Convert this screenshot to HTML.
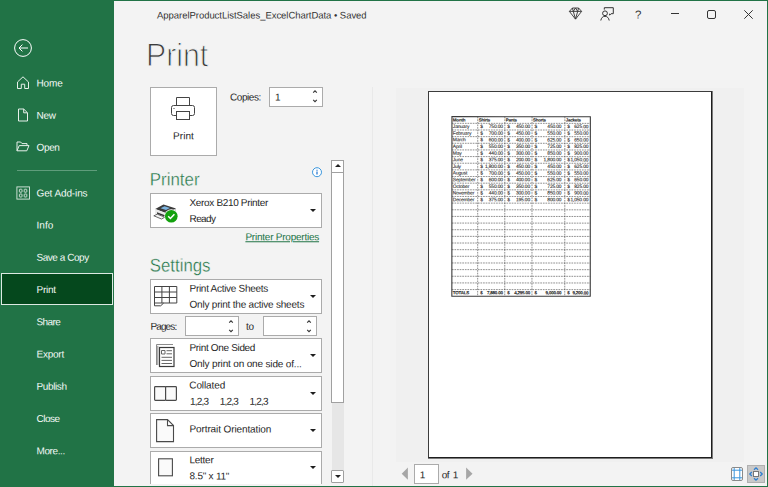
<!DOCTYPE html>
<html lang="en">
<head>
<meta charset="utf-8">
<title>Print</title>
<style>
*{box-sizing:border-box;margin:0;padding:0}
html,body{width:768px;height:487px;overflow:hidden;background:#f3f3f3}
body{font-family:"Liberation Sans",sans-serif;color:#262626;position:relative;font-size:10px}
.abs{position:absolute}
.t{position:absolute;white-space:nowrap;line-height:1;transform-origin:0 50%}
#frame{position:absolute;left:0;top:0;width:768px;height:487px;border:1px solid #217346;border-left:none;pointer-events:none;z-index:50}
#side{position:absolute;left:0;top:0;width:114px;height:487px;background:#217346;color:#fff}
#side .t{color:#f4f9f6}
svg{position:absolute;overflow:visible}
#sel{position:absolute;left:1px;top:273px;width:112px;height:32px;background:#05481d;border:1px solid #dde9e2}
.box{position:absolute;background:#fff;border:1px solid #ababab}
.hd{color:#217346}
.dd{position:absolute;left:150px;width:172px;height:35px;background:#fff;border:1px solid #ababab}
.ar{position:absolute;left:310px;width:0;height:0;border-left:3.200px solid transparent;border-right:3.200px solid transparent;border-top:3.600px solid #1e1e1e}
</style>
</head>
<body>

<!-- ============ SIDEBAR ============ -->
<div id="side">
  <svg style="left:14px;top:39px" width="18" height="18" viewBox="0 0 18 18" fill="none" stroke="#fff" stroke-width="1"><circle cx="9" cy="9" r="8.4"/><path d="M14 9H5.200M8.400 5.600L5 9l3.400 3.400"/></svg>

  <svg style="left:16px;top:75px" width="14" height="15" viewBox="0 0 14 15" fill="none" stroke="#e6f0ea" stroke-width="1"><path d="M1.5 7L7 1.8 12.5 7v6.5H8.7V9.2H5.3v4.3H1.5z"/></svg>
  <div class="t" id="t0" style="left:36px;top:78px;font-size:10px;transform:translate(0.50px,0.45px) rotate(0.06deg);letter-spacing:-0.149px">Home</div>

  <svg style="left:17px;top:108px" width="12" height="14" viewBox="0 0 12 14" fill="none" stroke="#e6f0ea" stroke-width="1"><path d="M1.5 1h5.2L10.5 4.8V13h-9zM6.7 1v3.8h3.8"/></svg>
  <div class="t" id="t1" style="left:36px;top:110px;font-size:10px;transform:translate(0.50px,0.85px) rotate(0.06deg);letter-spacing:-0.275px">New</div>

  <svg style="left:16px;top:141px" width="14" height="11" viewBox="0 0 14 11" fill="none" stroke="#e6f0ea" stroke-width="1"><path d="M1 9.8V1h3.6l1.4 1.6h5v2M1 9.8l2.2-5.2H13L10.8 9.8z"/></svg>
  <div class="t" id="t2" style="left:36px;top:142px;font-size:10px;transform:translate(0.50px,0.65px) rotate(0.06deg);letter-spacing:-0.345px">Open</div>

  <div class="abs" style="left:17px;top:169.600px;width:80px;height:1px;background:#5f9d7b"></div>

  <svg style="left:16px;top:185.500px" width="14" height="14" viewBox="0 0 14 14" fill="none" stroke="#dbe9e1" stroke-width="0.900"><rect x="0.900" y="0.900" width="12.600" height="12.200"/><rect x="3.400" y="3.200" width="2.600" height="3" rx="0.600"/><rect x="8.200" y="3.200" width="2.600" height="3" rx="0.600"/><rect x="3.400" y="8" width="2.600" height="3" rx="0.600"/><rect x="8.200" y="8" width="2.600" height="3" rx="0.600"/></svg>
  <div class="t" id="t3" style="left:36px;top:188px;font-size:10px;transform:translate(0.50px,0.45px) rotate(0.06deg);letter-spacing:-0.116px">Get Add-ins</div>

  <div class="t" id="t4" style="left:36px;top:220px;font-size:10px;transform:translate(0.50px,0.45px) rotate(0.06deg);letter-spacing:0.051px">Info</div>
  <div class="t" id="t5" style="left:36px;top:252px;font-size:10px;transform:translate(0.50px,0.65px) rotate(0.06deg);letter-spacing:-0.452px">Save a Copy</div>
  <div id="sel"></div>
  <div class="t" id="t6" style="left:36px;top:284px;font-size:10px;transform:translate(0.50px,0.95px) rotate(0.06deg);letter-spacing:-0.275px">Print</div>
  <div class="t" id="t7" style="left:36px;top:317px;font-size:10px;transform:translate(0.50px,0.15px) rotate(0.06deg);letter-spacing:-0.620px">Share</div>
  <div class="t" id="t8" style="left:36px;top:349px;font-size:10px;transform:translate(0.50px,0.45px) rotate(0.06deg);letter-spacing:-0.236px">Export</div>
  <div class="t" id="t9" style="left:36px;top:381px;font-size:10px;transform:translate(0.50px,0.65px) rotate(0.06deg);letter-spacing:-0.375px">Publish</div>
  <div class="t" id="t10" style="left:36px;top:414px;font-size:10px;transform:translate(0.50px,0.05px) rotate(0.06deg);letter-spacing:-0.498px">Close</div>
  <div class="t" id="t11" style="left:36px;top:446px;font-size:10px;transform:translate(0.50px,0.25px) rotate(0.06deg);letter-spacing:-0.405px">More...</div>
</div>

<!-- ============ TITLE BAR ============ -->
<div class="t" id="t12" style="left:157px;top:10px;font-size:9.5px;transform:translate(0.00px,0.40px) rotate(0.06deg);letter-spacing:-0.039px;color:#333">ApparelProductListSales_ExcelChartData • Saved</div>

<svg style="left:569px;top:7px" width="13" height="13" viewBox="0 0 13 13" fill="none" stroke="#333" stroke-width="0.9"><path d="M3.4 1h6.2l3 3.4L6.5 12.2 0.4 4.4zM0.4 4.4h12.2M4.3 4.4l2.2 7.6 2.2-7.6M3.4 1l.9 3.4L6.5 1l2.2 3.4L9.6 1"/></svg>
<svg style="left:600px;top:7px" width="14" height="14" viewBox="0 0 14 14" fill="none" stroke="#333" stroke-width="1"><circle cx="5" cy="6.3" r="2.4"/><path d="M0.8 13.5c.4-2.6 2-4.2 4.2-4.2s3.8 1.6 4.2 4.2M4.3 2.6V0.7h9v6h-2.2L9.6 8.2V6.7"/></svg>
<div class="t" id="t13" style="left:635px;top:9px;font-size:11.5px;transform:translate(0.00px,0.50px) rotate(0.06deg);color:#333">?</div>
<div class="abs" style="left:671px;top:13px;width:8px;height:1px;background:#333"></div>
<div class="abs" style="left:707px;top:10px;width:9px;height:9px;border:1px solid #333;border-radius:2px"></div>
<svg style="left:744px;top:10px" width="9" height="9" viewBox="0 0 9 9" stroke="#333" stroke-width="1"><path d="M0.3 0.3l8.4 8.4M8.7 0.3L0.3 8.7"/></svg>

<!-- ============ PRINT PANEL ============ -->
<div class="t" id="t14" style="left:146px;top:39px;font-size:32.7px;transform:translate(0.00px,0.10px) scaleX(0.925) rotate(0.06deg);color:#3b3b3b;-webkit-text-stroke:1px #f3f3f3">Print</div>

<div class="box" style="left:150px;top:87px;width:67px;height:69px"></div>
<svg style="left:171px;top:96px" width="24" height="24" viewBox="0 0 24 24" fill="none" stroke="#444" stroke-width="1"><path d="M5.500 9.500v-8h13v8M5.500 19.500h-3a2 2 0 0 1-2-2v-6a2 2 0 0 1 2-2h19a2 2 0 0 1 2 2v6a2 2 0 0 1-2 2h-3"/><rect x="5.500" y="15.500" width="13" height="8"/><path d="M2.500 12.500h1"/></svg>
<div class="t" id="t15" style="left:173px;top:131px;font-size:10px;transform:translate(0.00px,0.35px) rotate(0.06deg);letter-spacing:0.065px">Print</div>

<div class="t" id="t16" style="left:230px;top:92px;font-size:10px;transform:translate(0.00px,0.45px) rotate(0.06deg);letter-spacing:-0.445px">Copies:</div>
<div class="box" style="left:269px;top:87px;width:54px;height:20px"></div>
<div class="t" id="t17" style="left:275px;top:92px;font-size:10px;transform:translate(0.00px,0.45px) rotate(0.06deg)">1</div>
<svg class="abs" style="left:312px;top:89px" width="6" height="15" viewBox="0 0 6 15" fill="none" stroke="#333" stroke-width="1.1"><path d="M1.2 3.600l1.800-1.800 1.800 1.800M1.200 10.800l1.800 1.800 1.800-1.800"/></svg>

<div class="t hd" id="t18" style="left:149px;top:170px;font-size:18.2px;transform:translate(0.80px,0.55px) scaleX(0.93) rotate(0.06deg);-webkit-text-stroke:0.35px #f3f3f3">Printer</div>
<svg style="left:312px;top:166.500px" width="10" height="10" viewBox="0 0 10 10" fill="none" stroke="#3a96dd" stroke-width="1"><circle cx="5" cy="5.200" r="4.500" fill="#fff"/><path d="M5 4.600v3M5 2.800v1" stroke="#2b7cd3" stroke-width="1.300"/></svg>

<!-- scrollbar -->
<div class="abs" style="left:332px;top:172px;width:12px;height:298px;background:#e6e6e6"></div>
<div class="box" style="left:331px;top:160px;width:13px;height:13px;border-color:#a0a0a0"></div>
<div class="abs" style="left:334.500px;top:164px;width:0;height:0;border-left:3px solid transparent;border-right:3px solid transparent;border-bottom:3.500px solid #222"></div>
<div class="box" style="left:331px;top:172px;width:13px;height:231px;border-color:#a0a0a0"></div>
<div class="box" style="left:331px;top:470px;width:13px;height:13px;border-color:#a0a0a0;border-radius:1px"></div>
<div class="abs" style="left:334.500px;top:475px;width:0;height:0;border-left:3px solid transparent;border-right:3px solid transparent;border-top:3.500px solid #222"></div>

<!-- printer dropdown -->
<div class="dd" style="top:193px"></div>
<svg style="left:153px;top:203px" width="26" height="21" viewBox="0 0 26 21"><path d="M2.200 6L10.500 1.600 23 5.500 14 10.500z" fill="#3a3a3a"/><path d="M7.500 5.200l4-2 5.500 1.700-4 2.200z" fill="#7db4e0"/><path d="M2.200 6l11.800 4.500v5L2.200 11z" fill="#e9e9e9"/><path d="M14 10.500L23 5.500v4.500l-9 5.500z" fill="#c9c9c9"/><path d="M4 9.300l8 3v1.500l-8-3z" fill="#333"/><path d="M0.800 12.800l3.500-1.600 7.500 3-3.300 1.800z" fill="#f5f5f5" stroke="#444" stroke-width="0.800"/><circle cx="18.300" cy="13.200" r="6.900" fill="#fff"/><circle cx="18.300" cy="13.200" r="6.300" fill="#13a10e"/><path d="M15.200 13.300l2.200 2.200 4-4.300" fill="none" stroke="#fff" stroke-width="1.500"/></svg>
<div class="t" id="t19" style="left:189px;top:197px;font-size:10px;transform:translate(0.50px,0.95px) rotate(0.06deg);letter-spacing:-0.334px">Xerox B210 Printer</div>
<div class="t" id="t20" style="left:189px;top:214px;font-size:10px;transform:translate(0.50px,0.05px) rotate(0.06deg);letter-spacing:-0.583px">Ready</div>
<div class="ar" style="top:209px"></div>
<div class="t hd" id="t21" style="left:245px;top:232px;font-size:10px;transform:translate(0.40px,0.25px) rotate(0.06deg);letter-spacing:-0.229px;text-decoration:underline">Printer Properties</div>

<div class="t hd" id="t22" style="left:149px;top:256px;font-size:18.3px;transform:translate(0.80px,0.40px) scaleX(0.918) rotate(0.06deg);-webkit-text-stroke:0.35px #f3f3f3">Settings</div>

<div class="dd" style="top:279px"></div>
<svg style="left:154px;top:286px" width="23" height="21" viewBox="0 0 23 21" fill="none" stroke="#444" stroke-width="1"><path d="M0.500 0.500h22.300v16.500h-22.300zM0.500 6h22.300M0.500 11.500h22.300M7.900 0.500v16.500M15.400 0.500v16.500M0.500 17v2.800h6.200l3-2.800"/></svg>
<div class="t" id="t23" style="left:189px;top:283px;font-size:10px;transform:translate(0.50px,0.65px) rotate(0.06deg);letter-spacing:-0.287px">Print Active Sheets</div>
<div class="t" id="t24" style="left:189px;top:299px;font-size:10px;transform:translate(0.50px,0.75px) rotate(0.06deg);letter-spacing:-0.212px">Only print the active sheets</div>
<div class="ar" style="top:295px"></div>

<div class="t" id="t25" style="left:150px;top:321px;font-size:10px;transform:translate(0.40px,0.85px) rotate(0.06deg);letter-spacing:-0.859px">Pages:</div>
<div class="box" style="left:185px;top:316px;width:54px;height:20px"></div>
<svg class="abs" style="left:228px;top:319px" width="6" height="15" viewBox="0 0 6 15" fill="none" stroke="#333" stroke-width="1.1"><path d="M1.2 3.600l1.800-1.800 1.800 1.800M1.200 10.800l1.800 1.800 1.800-1.800"/></svg>
<div class="t" id="t26" style="left:246px;top:321px;font-size:10px;transform:translate(0.00px,0.85px) rotate(0.06deg);letter-spacing:-0.177px">to</div>
<div class="box" style="left:263px;top:316px;width:54px;height:20px"></div>
<svg class="abs" style="left:306px;top:319px" width="6" height="15" viewBox="0 0 6 15" fill="none" stroke="#333" stroke-width="1.1"><path d="M1.2 3.600l1.800-1.800 1.800 1.800M1.200 10.800l1.800 1.800 1.800-1.800"/></svg>

<div class="dd" style="top:338px"></div>
<svg style="left:156px;top:344px" width="19" height="23" viewBox="0 0 19 23" fill="none" stroke="#444" stroke-width="1"><path d="M0.500 21V0.500h16.500M1.800 21V1.800" stroke="#8c8c8c"/><rect x="3.500" y="3.500" width="14.500" height="19" stroke="#3a3a3a" stroke-width="1.200"/><path d="M5.500 6.500h3.500v3.500h-3.500zM10.500 6.700h5.500M10.500 9.800h5.500M5.500 13.300h10.500M5.500 16.400h10.500M5.500 19.500h10.500" stroke="#666"/></svg>
<div class="t" id="t27" style="left:189px;top:342px;font-size:10px;transform:translate(0.50px,0.95px) rotate(0.06deg);letter-spacing:-0.335px">Print One Sided</div>
<div class="t" id="t28" style="left:189px;top:359px;font-size:10px;transform:translate(0.50px,0.05px) rotate(0.06deg);letter-spacing:-0.162px">Only print on one side of...</div>
<div class="ar" style="top:354px"></div>

<div class="dd" style="top:376px"></div>
<svg style="left:154px;top:386px" width="24" height="16" viewBox="0 0 24 16" fill="#fafafa" stroke="#4a4a4a" stroke-width="1.200"><rect x="0.600" y="0.600" width="11" height="13.800" rx="0.800"/><rect x="11.600" y="0.600" width="10.800" height="13.800" rx="0.800"/></svg>
<div class="t" id="t29" style="left:189px;top:380px;font-size:10px;transform:translate(0.30px,0.45px) rotate(0.06deg);letter-spacing:-0.114px">Collated</div>
<div class="t" id="t30" style="left:190px;top:396px;font-size:10px;transform:translate(0.00px,0.65px) rotate(0.06deg);letter-spacing:-0.812px">1,2,3</div>
<div class="t" id="t31" style="left:219px;top:396px;font-size:10px;transform:translate(0.80px,0.65px) rotate(0.06deg);letter-spacing:-0.812px">1,2,3</div>
<div class="t" id="t32" style="left:249px;top:396px;font-size:10px;transform:translate(0.50px,0.65px) rotate(0.06deg);letter-spacing:-0.812px">1,2,3</div>
<div class="ar" style="top:392px"></div>

<div class="dd" style="top:413px"></div>
<svg style="left:156px;top:419px" width="18" height="23" viewBox="0 0 18 23" fill="#fafafa" stroke="#4a4a4a" stroke-width="1.100"><path d="M0.600 0.600h10.900l6 6v16h-16.900zM11.500 0.600v6h6"/></svg>
<div class="t" id="t33" style="left:189px;top:424px;font-size:10px;transform:translate(0.50px,0.35px) rotate(0.06deg);letter-spacing:-0.112px">Portrait Orientation</div>
<div class="ar" style="top:429px"></div>

<div class="dd" style="top:451px;height:33px;border-bottom:none"></div>
<svg style="left:158px;top:458px" width="15" height="19" viewBox="0 0 15 19" fill="#fafafa" stroke="#4a4a4a" stroke-width="1.100"><rect x="0.600" y="0.800" width="13.800" height="17"/></svg>
<div class="t" id="t34" style="left:189px;top:455px;font-size:10px;transform:translate(0.50px,0.25px) rotate(0.06deg);letter-spacing:-0.265px">Letter</div>
<div class="t" id="t35" style="left:189px;top:471px;font-size:10px;transform:translate(0.50px,0.35px) rotate(0.06deg);letter-spacing:-0.226px">8.5" x 11"</div>
<div class="ar" style="top:466px"></div>

<div class="abs" style="left:372px;top:87px;width:1px;height:400px;background:#e9e9e9"></div>

<!-- ============ PREVIEW ============ -->
<div class="abs" style="left:396px;top:88px;width:348px;height:374px;background:#f0f0f0"></div>
<div class="abs" style="left:428px;top:91px;width:285px;height:368px;background:#7a7a7a"></div>
<div class="abs" style="left:428px;top:91px;width:284px;height:367px;background:#fff;border:1px solid #3c3c3c;border-right-color:#1e1e1e;border-bottom-color:#1e1e1e"></div>

<svg id="tbl" style="left:451px;top:116px" width="141" height="183" viewBox="0 0 141 183" font-family="Liberation Sans, sans-serif" font-size="4.900" fill="#1c1c1c" stroke="#1c1c1c" stroke-width="0.080" letter-spacing="-0.150"><g transform="rotate(0.03 70 90)">
<path d="M0.9 7.35H139.3M0.9 14H139.3M0.9 20.65H139.3M0.9 27.3H139.3M0.9 33.95H139.3M0.9 40.6H139.3M0.9 47.25H139.3M0.9 53.9H139.3M0.9 60.55H139.3M0.9 67.2H139.3M0.9 73.85H139.3M0.9 80.5H139.3M0.9 87.15H139.3M0.9 93.8H139.3M0.9 100.45H139.3M0.9 107.1H139.3M0.9 113.75H139.3M0.9 120.4H139.3M0.9 127.05H139.3M0.9 133.7H139.3M0.9 140.35H139.3M0.9 147H139.3M0.9 153.65H139.3M0.9 160.3H139.3M0.9 166.95H139.3M0.9 173.6H139.3M26.7 0.7V180.25M53.8 0.7V180.25M81 0.7V180.25M113.8 0.7V180.25" fill="none" stroke="#333" stroke-width="0.550" stroke-dasharray="1.700 0.900"/>
<rect x="0.9" y="0.7" width="138.4" height="179.55" fill="none" stroke="#3a3a3a" stroke-width="1.100"/>
<text x="1.8" y="5.45" font-weight="bold" font-size="4.500" letter-spacing="-0.220">Month</text>
<text x="27.6" y="5.45" font-weight="bold" font-size="4.500" letter-spacing="-0.220">Shirts</text>
<text x="54.7" y="5.45" font-weight="bold" font-size="4.500" letter-spacing="-0.220">Pants</text>
<text x="81.9" y="5.45" font-weight="bold" font-size="4.500" letter-spacing="-0.220">Shorts</text>
<text x="114.7" y="5.45" font-weight="bold" font-size="4.500" letter-spacing="-0.220">Jackets</text>
<text x="1.8" y="12.1">January</text>
<text x="29.2" y="12.1">$</text>
<text x="51.8" y="12.1" text-anchor="end">750.00</text>
<text x="56.3" y="12.1">$</text>
<text x="79" y="12.1" text-anchor="end">450.00</text>
<text x="83.5" y="12.1">$</text>
<text x="110.4" y="12.1" text-anchor="end">450.00</text>
<text x="116.3" y="12.1">$</text>
<text x="137.3" y="12.1" text-anchor="end">625.00</text>
<text x="1.8" y="18.75">February</text>
<text x="29.2" y="18.75">$</text>
<text x="51.8" y="18.75" text-anchor="end">700.00</text>
<text x="56.3" y="18.75">$</text>
<text x="79" y="18.75" text-anchor="end">450.00</text>
<text x="83.5" y="18.75">$</text>
<text x="110.4" y="18.75" text-anchor="end">550.00</text>
<text x="116.3" y="18.75">$</text>
<text x="137.3" y="18.75" text-anchor="end">550.00</text>
<text x="1.8" y="25.4">March</text>
<text x="29.2" y="25.4">$</text>
<text x="51.8" y="25.4" text-anchor="end">600.00</text>
<text x="56.3" y="25.4">$</text>
<text x="79" y="25.4" text-anchor="end">400.00</text>
<text x="83.5" y="25.4">$</text>
<text x="110.4" y="25.4" text-anchor="end">625.00</text>
<text x="116.3" y="25.4">$</text>
<text x="137.3" y="25.4" text-anchor="end">650.00</text>
<text x="1.8" y="32.05">April</text>
<text x="29.2" y="32.05">$</text>
<text x="51.8" y="32.05" text-anchor="end">550.00</text>
<text x="56.3" y="32.05">$</text>
<text x="79" y="32.05" text-anchor="end">350.00</text>
<text x="83.5" y="32.05">$</text>
<text x="110.4" y="32.05" text-anchor="end">725.00</text>
<text x="116.3" y="32.05">$</text>
<text x="137.3" y="32.05" text-anchor="end">825.00</text>
<text x="1.8" y="38.7">May</text>
<text x="29.2" y="38.7">$</text>
<text x="51.8" y="38.7" text-anchor="end">440.00</text>
<text x="56.3" y="38.7">$</text>
<text x="79" y="38.7" text-anchor="end">300.00</text>
<text x="83.5" y="38.7">$</text>
<text x="110.4" y="38.7" text-anchor="end">850.00</text>
<text x="116.3" y="38.7">$</text>
<text x="137.3" y="38.7" text-anchor="end">900.00</text>
<text x="1.8" y="45.35">June</text>
<text x="29.2" y="45.35">$</text>
<text x="51.8" y="45.35" text-anchor="end">375.00</text>
<text x="56.3" y="45.35">$</text>
<text x="79" y="45.35" text-anchor="end">200.00</text>
<text x="83.5" y="45.35">$</text>
<text x="110.4" y="45.35" text-anchor="end">1,800.00</text>
<text x="116.3" y="45.35">$</text>
<text x="137.3" y="45.35" text-anchor="end">1,050.00</text>
<text x="1.8" y="52">July</text>
<text x="29.2" y="52">$</text>
<text x="51.8" y="52" text-anchor="end">1,800.00</text>
<text x="56.3" y="52">$</text>
<text x="79" y="52" text-anchor="end">450.00</text>
<text x="83.5" y="52">$</text>
<text x="110.4" y="52" text-anchor="end">450.00</text>
<text x="116.3" y="52">$</text>
<text x="137.3" y="52" text-anchor="end">625.00</text>
<text x="1.8" y="58.65">August</text>
<text x="29.2" y="58.65">$</text>
<text x="51.8" y="58.65" text-anchor="end">700.00</text>
<text x="56.3" y="58.65">$</text>
<text x="79" y="58.65" text-anchor="end">450.00</text>
<text x="83.5" y="58.65">$</text>
<text x="110.4" y="58.65" text-anchor="end">550.00</text>
<text x="116.3" y="58.65">$</text>
<text x="137.3" y="58.65" text-anchor="end">550.00</text>
<text x="1.8" y="65.3">September</text>
<text x="29.2" y="65.3">$</text>
<text x="51.8" y="65.3" text-anchor="end">600.00</text>
<text x="56.3" y="65.3">$</text>
<text x="79" y="65.3" text-anchor="end">400.00</text>
<text x="83.5" y="65.3">$</text>
<text x="110.4" y="65.3" text-anchor="end">625.00</text>
<text x="116.3" y="65.3">$</text>
<text x="137.3" y="65.3" text-anchor="end">650.00</text>
<text x="1.8" y="71.95">October</text>
<text x="29.2" y="71.95">$</text>
<text x="51.8" y="71.95" text-anchor="end">550.00</text>
<text x="56.3" y="71.95">$</text>
<text x="79" y="71.95" text-anchor="end">350.00</text>
<text x="83.5" y="71.95">$</text>
<text x="110.4" y="71.95" text-anchor="end">725.00</text>
<text x="116.3" y="71.95">$</text>
<text x="137.3" y="71.95" text-anchor="end">825.00</text>
<text x="1.8" y="78.6">November</text>
<text x="29.2" y="78.6">$</text>
<text x="51.8" y="78.6" text-anchor="end">440.00</text>
<text x="56.3" y="78.6">$</text>
<text x="79" y="78.6" text-anchor="end">300.00</text>
<text x="83.5" y="78.6">$</text>
<text x="110.4" y="78.6" text-anchor="end">850.00</text>
<text x="116.3" y="78.6">$</text>
<text x="137.3" y="78.6" text-anchor="end">900.00</text>
<text x="1.8" y="85.25">December</text>
<text x="29.2" y="85.25">$</text>
<text x="51.8" y="85.25" text-anchor="end">375.00</text>
<text x="56.3" y="85.25">$</text>
<text x="79" y="85.25" text-anchor="end">195.00</text>
<text x="83.5" y="85.25">$</text>
<text x="110.4" y="85.25" text-anchor="end">800.00</text>
<text x="116.3" y="85.25">$</text>
<text x="137.3" y="85.25" text-anchor="end">1,050.00</text>
<text x="1.8" y="178.35" font-weight="bold" font-size="4.500" letter-spacing="-0.220">TOTALS</text>
<text x="29.2" y="178.35" font-weight="bold" font-size="4.500" letter-spacing="-0.220">$</text>
<text x="51.8" y="178.35" text-anchor="end" font-weight="bold" font-size="4.500" letter-spacing="-0.220">7,880.00</text>
<text x="56.3" y="178.35" font-weight="bold" font-size="4.500" letter-spacing="-0.220">$</text>
<text x="79" y="178.35" text-anchor="end" font-weight="bold" font-size="4.500" letter-spacing="-0.220">4,295.00</text>
<text x="83.5" y="178.35" font-weight="bold" font-size="4.500" letter-spacing="-0.220">$</text>
<text x="110.4" y="178.35" text-anchor="end" font-weight="bold" font-size="4.500" letter-spacing="-0.220">9,000.00</text>
<text x="116.3" y="178.35" font-weight="bold" font-size="4.500" letter-spacing="-0.220">$</text>
<text x="137.3" y="178.35" text-anchor="end" font-weight="bold" font-size="4.500" letter-spacing="-0.220">9,200.00</text>
</g></svg>

<svg style="left:401px;top:467px" width="8" height="14" viewBox="0 0 8 14"><path d="M6.900 0.600v12.200L0.700 6.700z" fill="#a6a6a6"/></svg>
<div class="box" style="left:414px;top:464px;width:25px;height:20px"></div>
<div class="t" id="t36" style="left:419px;top:470px;font-size:10px;transform:translate(0.70px,0.25px) rotate(0.06deg)">1</div>
<div class="t" id="t37" style="left:441px;top:470px;font-size:10px;transform:translate(0.80px,0.25px) rotate(0.06deg);letter-spacing:-0.598px;word-spacing:1.600px">of 1</div>
<svg style="left:465px;top:467px" width="8" height="14" viewBox="0 0 8 14"><path d="M1.100 0.600v12.200L7.500 6.700z" fill="#a6a6a6"/></svg>

<svg style="left:731px;top:467px" width="12" height="14" viewBox="0 0 12 14" fill="none"><rect x="0.500" y="0.500" width="11" height="13" rx="1.500" fill="#fff" stroke="#8a8a8a"/><path d="M3.200 1v12M8.800 1v12M1 3.200h10M1 10.800h10" stroke="#3a96dd" stroke-width="1"/></svg>
<div class="abs" style="left:747px;top:465px;width:18px;height:18px;background:#c9c9c9;border:1px solid #b0b0b0"></div>
<svg style="left:749px;top:467px" width="14" height="14" viewBox="0 0 14 14" fill="none"><rect x="4.500" y="4.500" width="5" height="5" fill="#fff" stroke="#777"/><path d="M5 2.800L7 0.800l2 2M5 11.200l2 2 2-2M2.800 5L0.800 7l2 2M11.200 5l2 2-2 2" stroke="#2f7fd0" stroke-width="1.300"/></svg>

<div id="frame"></div>

</body>
</html>
